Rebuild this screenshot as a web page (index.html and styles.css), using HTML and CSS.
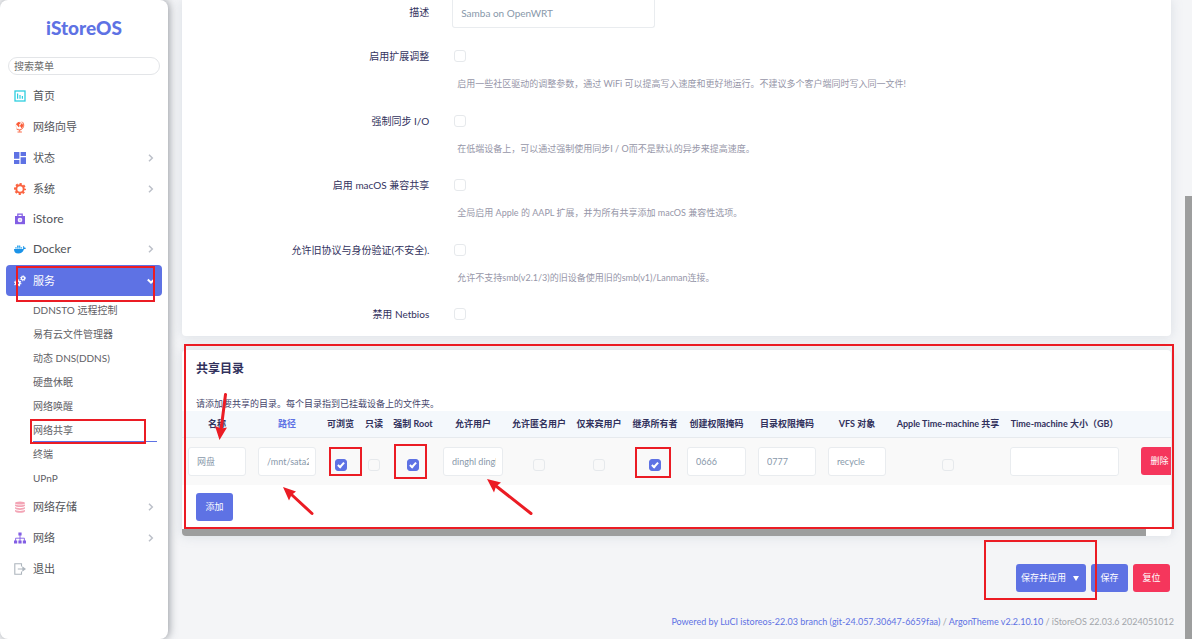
FILE: index.html
```html
<!DOCTYPE html>
<html lang="zh-CN">
<head>
<meta charset="utf-8">
<title>iStoreOS - 网络共享</title>
<link rel="stylesheet" href="styles.css">
</head>
<body>
<div class="app">
  <aside class="sidebar">
    <a class="brand" href="#">iStoreOS</a>
    <input class="search" type="search" placeholder="搜索菜单" aria-label="搜索菜单">
    <nav>
      <ul class="menu">
        <li><a class="item" href="#"><svg class="icon" viewBox="0 0 12 12" fill="none" stroke="#2dcedf"><rect x="1" y="1" width="10" height="10" stroke-width="1.3"/><path d="M3.6 3.5v5.2M6 5v3.7M8.4 6v2.7" stroke-width="1.2"/></svg><span>首页</span></a></li>
        <li><a class="item" href="#"><svg class="icon" viewBox="0 0 12 12"><circle cx="5.6" cy="4.8" r="3.7" fill="#fff" stroke="#fbc4b6" stroke-width=".6"/><path d="M2 3.2 4.3 1l2.3.5-.4 1.4-1.3.7.8 1.4-1 1.2-1.4-1.6zM7.3 2.3l1.8 1.5-.3 2.3-1.6 1.2-.5-1.6-1-.6.8-1z" fill="#fb5a36"/><path d="M8 .7c3 2.2 2 7.6-2.3 8.2-1.3.1-2.4-.2-3.2-.9M5.7 9v1.7M3.5 11h4.4" fill="none" stroke="#fb6a49" stroke-width="1"/></svg><span>网络向导</span></a></li>
        <li><a class="item" href="#"><svg class="icon" viewBox="0 0 12 12" fill="#5e72e4"><path d="M0 0h5.4v6.8H0zM0 8h5.4v4H0zM6.6 0H12v4H6.6zM6.6 5.2H12V12H6.6z"/></svg><span>状态</span><svg class="chevron" viewBox="0 0 8 8"><path d="m2 .8 3.3 3.2L2 7.2"/></svg></a></li>
        <li><a class="item" href="#"><svg class="icon" viewBox="0 0 12 12"><g fill="none" stroke="#fb6340"><circle cx="6" cy="6" r="3.7" stroke-width="2"/><circle cx="6" cy="6" r="5" stroke-width="2" stroke-dasharray="2.1 1.827" stroke-dashoffset="1"/></g></svg><span>系统</span><svg class="chevron" viewBox="0 0 8 8"><path d="m2 .8 3.3 3.2L2 7.2"/></svg></a></li>
        <li><a class="item latin" href="#"><svg class="icon" viewBox="0 0 12 12"><path d="M1 3h10v8.2H1z" fill="#825ee4"/><path d="M3.8 3V1.2h4.4V3" fill="none" stroke="#825ee4" stroke-width="1.2"/><circle cx="6" cy="7" r="2.3" fill="#fff"/><path d="M6 5.6v2.8M4.6 7h2.8" stroke="#c9b9f5" stroke-width=".8"/></svg><span>iStore</span></a></li>
        <li><a class="item latin" href="#"><svg class="icon" viewBox="0 0 12 12" fill="#1b93e8"><path d="M0 6h8.8c.6-.5.6-1.5.1-2.3l.6-.6c.7.5 1 1 1 1.7.6-.2 1.1 0 1.5.3-.4.8-1 1.2-2.1 1.2C9 9.2 7 10.6 4.2 10.6 1.5 10.6 0 9 0 6z"/><path d="M1.2 4.2h1.5v1.4H1.2zM3 4.2h1.5v1.4H3zM4.8 4.2h1.5v1.4H4.8zM6.6 4.2h1.5v1.4H6.6zM3 2.5h1.5v1.4H3zM4.8 2.5h1.5v1.4H4.8z" fill="#35a7ee"/></svg><span>Docker</span><svg class="chevron" viewBox="0 0 8 8"><path d="m2 .8 3.3 3.2L2 7.2"/></svg></a></li>
        <li>
          <a class="item open" href="#"><svg class="icon" viewBox="0 0 12 12" fill="none" stroke="#fff"><circle cx="3.7" cy="8" r="2" stroke-width="1.5"/><circle cx="3.7" cy="8" r="3.1" stroke-width="1.2" stroke-dasharray="1.2 1.235"/><circle cx="9" cy="3.3" r="1.6" stroke-width="1.3"/><circle cx="9" cy="3.3" r="2.5" stroke-width="1" stroke-dasharray="1 .963"/></svg><span>服务</span><svg class="chevron" viewBox="0 0 8 8"><path d="m.8 2.5 3.2 3.2 3.2-3.2"/></svg></a>
          <ul class="submenu">
            <li><a href="#">DDNSTO 远程控制</a></li>
            <li><a href="#">易有云文件管理器</a></li>
            <li><a href="#">动态 DNS(DDNS)</a></li>
            <li><a href="#">硬盘休眠</a></li>
            <li><a href="#">网络唤醒</a></li>
            <li><a class="current" href="#" aria-current="page">网络共享</a></li>
            <li><a href="#">终端</a></li>
            <li><a href="#">UPnP</a></li>
          </ul>
        </li>
        <li><a class="item" href="#"><svg class="icon" viewBox="0 0 12 12" fill="#f3a4b5"><ellipse cx="6" cy="2" rx="5" ry="1.6"/><path d="M1 3.2c1 1.5 9 1.5 10 0v1.6c-1 1.7-9 1.7-10 0zM1 6c1 1.5 9 1.5 10 0v1.6c-1 1.7-9 1.7-10 0zM1 8.8c1 1.5 9 1.5 10 0v1.4c-1 2-9 2-10 0z"/></svg><span>网络存储</span><svg class="chevron" viewBox="0 0 8 8"><path d="m2 .8 3.3 3.2L2 7.2"/></svg></a></li>
        <li><a class="item" href="#"><svg class="icon" viewBox="0 0 12 12" fill="#825ee4"><path d="M4.4.4h3.2v3H4.4zM0 8.6h3.2v3H0zM4.4 8.6h3.2v3H4.4zM8.8 8.6H12v3H8.8z"/><path d="M6 3v6M1.6 9V6.2h8.8V9" fill="none" stroke="#825ee4" stroke-width=".9"/></svg><span>网络</span><svg class="chevron" viewBox="0 0 8 8"><path d="m2 .8 3.3 3.2L2 7.2"/></svg></a></li>
        <li><a class="item" href="#"><svg class="icon" viewBox="0 0 12 12" fill="none" stroke="#adb5bd" stroke-width="1.1"><path d="M7.5 3.5V.8H.8v10.4h6.7V8.5M3.8 6h5"/><path d="M8.3 3.2 12 6 8.300 8.800z" fill="#adb5bd" stroke="none"/></svg><span>退出</span></a></li>
      </ul>
    </nav>
  </aside>

  <main class="main">
    <section class="card settings">
      <div class="field first">
        <label for="desc">描述</label>
        <div class="value"><input class="text" id="desc" type="text" value="Samba on OpenWRT"></div>
      </div>
      <div class="field">
        <label for="tune">启用扩展调整</label>
        <div class="value"><input class="check" id="tune" type="checkbox"><p>启用一些社区驱动的调整参数，通过 WiFi 可以提高写入速度和更好地运行。不建议多个客户端同时写入同一文件!</p></div>
      </div>
      <div class="field">
        <label for="sync">强制同步 I/O</label>
        <div class="value"><input class="check" id="sync" type="checkbox"><p>在低端设备上，可以通过强制使用同步I / O而不是默认的异步来提高速度。</p></div>
      </div>
      <div class="field">
        <label for="macos">启用 macOS 兼容共享</label>
        <div class="value"><input class="check" id="macos" type="checkbox"><p>全局启用 Apple 的 AAPL 扩展，并为所有共享添加 macOS 兼容性选项。</p></div>
      </div>
      <div class="field">
        <label for="legacy">允许旧协议与身份验证(不安全).</label>
        <div class="value"><input class="check" id="legacy" type="checkbox"><p>允许不支持smb(v2.1/3)的旧设备使用旧的smb(v1)/Lanman连接。</p></div>
      </div>
      <div class="field">
        <label for="netbios">禁用 Netbios</label>
        <div class="value"><input class="check" id="netbios" type="checkbox"></div>
      </div>
    </section>

    <section class="card shares">
      <h3>共享目录</h3>
      <p class="hint">请添加要共享的目录。每个目录指到已挂载设备上的文件夹。</p>
      <table class="table">
        <colgroup>
          <col class="w70"><col class="w70"><col class="w37"><col class="w30"><col class="w48"><col class="w72"><col class="w60"><col class="w60"><col class="w52"><col class="w71"><col class="w70"><col class="w70"><col class="w112"><col class="w121"><col class="w70">
        </colgroup>
        <thead>
          <tr><th>名称</th><th><a href="#">路径</a></th><th>可浏览</th><th>只读</th><th>强制 Root</th><th>允许用户</th><th>允许匿名用户</th><th>仅来宾用户</th><th>继承所有者</th><th>创建权限掩码</th><th>目录权限掩码</th><th>VFS 对象</th><th>Apple Time-machine 共享</th><th>Time-machine 大小（GB）</th><th></th></tr>
        </thead>
        <tbody>
          <tr>
            <td><input class="text" type="text" value="网盘" aria-label="名称"></td>
            <td><input class="text" type="text" value="/mnt/sata2" aria-label="路径"></td>
            <td><input class="check" type="checkbox" checked aria-label="可浏览"></td>
            <td><input class="check" type="checkbox" aria-label="只读"></td>
            <td><input class="check" type="checkbox" checked aria-label="强制 Root"></td>
            <td><input class="text" type="text" value="dinghl dinghl" aria-label="允许用户"></td>
            <td><input class="check" type="checkbox" aria-label="允许匿名用户"></td>
            <td><input class="check" type="checkbox" aria-label="仅来宾用户"></td>
            <td><input class="check" type="checkbox" checked aria-label="继承所有者"></td>
            <td><input class="text" type="text" value="0666" aria-label="创建权限掩码"></td>
            <td><input class="text" type="text" value="0777" aria-label="目录权限掩码"></td>
            <td><input class="text" type="text" value="recycle" aria-label="VFS 对象"></td>
            <td><input class="check" type="checkbox" aria-label="Apple Time-machine 共享"></td>
            <td><input class="text" type="text" aria-label="Time-machine 大小（GB）"></td>
            <td class="action"><button class="btn danger" type="button">删除</button></td>
          </tr>
        </tbody>
      </table>
      <div class="add"><button class="btn primary" type="button">添加</button></div>
      <div class="hscroll"><div class="hthumb"></div></div>
    </section>

    <div class="actions">
      <button class="btn primary apply" type="button">保存并应用<span class="caret"></span></button>
      <button class="btn primary" type="button">保存</button>
      <button class="btn danger" type="button">复位</button>
    </div>
    <footer class="footer"><a href="#">Powered by LuCI istoreos-22.03 branch (git-24.057.30647-6659faa)</a> / <a href="#">ArgonTheme v2.2.10.10</a> / iStoreOS 22.03.6 2024051012</footer>
  </main>
  <div class="vscroll"><div class="vthumb"></div></div>
</div>

<svg class="marks" width="1192" height="639" viewBox="0 0 1192 639" aria-hidden="true">
  <g fill="none" stroke="#eb1c24" stroke-width="2">
    <rect x="17" y="267" width="137" height="34"/>
    <rect x="31" y="420" width="114" height="23"/>
    <rect x="185" y="345" width="988" height="183"/>
    <rect x="330" y="448" width="31" height="27"/>
    <rect x="395" y="445" width="31" height="33"/>
    <rect x="636" y="448" width="34" height="29"/>
    <rect x="985" y="541" width="111" height="58"/>
  </g>
  <g stroke="#eb1c24" stroke-width="3" stroke-linecap="round">
    <path d="M225.5 394.5 221 430M312 513.5 292 495M531 513.5 496 486"/>
  </g>
  <g fill="#eb1c24">
    <path d="m219.5 440-4.500-14 6 2.500 6-1z"/>
    <path d="m283 487 13 4.500-4.500 3.500-2.500 5.500z"/>
    <path d="m487 479 14 3.500-5 4-2 6z"/>
  </g>
</svg>
</body>
</html>
```
FILE: styles.css
```css
*, *::after { box-sizing: border-box; }

body {
  margin: 0;
  overflow: hidden;
  background: #f4f5f7;
  color: #32325d;
  font: 10px/16px Lato, "Noto Sans CJK SC", sans-serif;
}

a { color: #5e72e4; text-decoration: none; }
input, button { font: inherit; }
ul { margin: 0; padding: 0; list-style: none; }

.app { display: flex; height: 100vh; }

/* Sidebar */
.sidebar {
  z-index: 1;
  flex: none;
  width: 168px;
  padding: 16px 6px 0;
  border-radius: 8px;
  background: #fff;
  box-shadow: 1px 0 8px rgba(70, 75, 85, .55);
}

.brand {
  display: block;
  font-size: 19px;
  line-height: 24px;
  font-weight: 900;
  text-align: center;
}

.search {
  display: block;
  width: calc(100% - 4px);
  height: 18px;
  margin: 17px 2px 5px;
  padding: 0 5px;
  border: 1px solid #e3e5e8;
  border-radius: 9px;
  background: #fff;
  outline: 0;
}
.search::placeholder { color: #6c6c6c; }

.item {
  display: flex;
  align-items: center;
  height: 31px;
  padding: 0 7px 0 8px;
  border-radius: 4px;
  color: #525459;
  font-size: 11px;
}
.item.latin { height: 30px; font-size: 12px; }
.item.open { margin-top: 1px; background: #5e72e4; color: #fff; }
.item span { flex: 1; }

.icon { width: 12px; height: 12px; margin-right: 7px; }

.chevron {
  width: 8px;
  height: 8px;
  fill: none;
  stroke: #bcc0c9;
  stroke-width: 1.5;
}
.open .chevron { stroke: #fff; stroke-width: 2; }

.submenu { padding: 2px 5px 1px 27px; }
.submenu a {
  display: block;
  height: 24px;
  color: #5f6166;
  line-height: 24px;
}
.submenu .current { border-bottom: 1px solid #5e72e4; }

/* Content */
.main {
  flex: 1;
  min-width: 0;
  padding: 0 14px;
}

.card {
  border-radius: 4px;
  background: #fff;
  box-shadow: 0 0 12px rgba(136, 152, 170, .25);
}

.settings {
  display: grid;
  grid-template-rows: 48px repeat(4, 1fr) 30px;
  height: 336px;
  margin-bottom: 14px;
  border-radius: 0 0 4px 4px;
}

.field {
  display: grid;
  grid-template-columns: 25% 1fr;
  column-gap: 23px;
}
.field label { text-align: right; }
.field.first label { padding-top: 4px; }

.value .check { display: block; margin: 2px 2px 0; }
.value p {
  margin: 15px 0 0 5px;
  color: #9696a8;
  font-size: 9px;
  line-height: 14px;
}
.first .text {
  display: block;
  width: 203px;
  height: 28px;
  padding-bottom: 2px;
  border-top: 0;
  border-radius: 0 0 3px 3px;
  font-size: 10px;
}

.text {
  width: 100%;
  height: 29px;
  padding: 0 6px 0 8px;
  border: 1px solid #e9ecef;
  border-radius: 3px;
  background: #fff;
  color: #8898aa;
  font-size: 9px;
  outline: 0;
}

.check {
  position: relative;
  width: 12px;
  height: 12px;
  margin: 0;
  border: 1px solid #e6e9ec;
  border-radius: 3px;
  appearance: none;
}
.check:checked { border-color: #5e72e4; background: #5e72e4; }
.check:checked::after {
  position: absolute;
  top: 1px;
  left: 3px;
  width: 4px;
  height: 7px;
  border: solid #fff;
  border-width: 0 2px 2px 0;
  content: "";
  transform: rotate(42deg);
}

.shares { overflow: hidden; }
.shares h3 {
  margin: 0;
  padding: 11px 14px 0;
  font-size: 12px;
  line-height: 16px;
  font-weight: 700;
}
.hint {
  margin: 19px 14px 0;
  color: #45456b;
  font-size: 9px;
  line-height: 15px;
}

.table {
  width: 1013px;
  table-layout: fixed;
  border-collapse: collapse;
  font-size: 9px;
}
.table th {
  height: 26px;
  padding: 0;
  border-bottom: 1px solid #e6eaee;
  background: #f4f8fc;
  font-weight: 700;
  line-height: 14px;
  white-space: nowrap;
}
.table td {
  height: 48px;
  padding: 0 6px;
  background: #f9f9f9;
  text-align: center;
}
.table td .check { margin-top: 8px; vertical-align: middle; }
.table .action { padding: 0 16px; text-align: left; }

.w30 { width: 30px; }
.w37 { width: 37px; }
.w48 { width: 48px; }
.w52 { width: 52px; }
.w60 { width: 60px; }
.w70 { width: 70px; }
.w71 { width: 71px; }
.w72 { width: 72px; }
.w112 { width: 112px; }
.w121 { width: 121px; }

.add { padding: 8px 14px; }

.btn {
  display: block;
  height: 28px;
  min-width: 37px;
  padding: 0 9px;
  border: 0;
  border-radius: 3px;
  color: #fff;
  font-size: 9px;
  white-space: nowrap;
}
.primary { background: #5e72e4; }
.danger { background: #f5365c; }

.hscroll { height: 7px; }
.hthumb { width: 97.5%; height: 7px; background: #9d9e9e; }

.actions {
  display: flex;
  justify-content: flex-end;
  gap: 5px;
  padding: 28px 1px 0 0;
}
.apply {
  display: flex;
  align-items: center;
  gap: 7px;
  padding: 0 7px 0 5px;
}
.caret {
  border: 3px solid transparent;
  border-top: 5px solid #fff;
  border-bottom: 0;
}

.footer {
  margin: 22px -3px 0 0;
  color: #a3a6ab;
  font-size: 9px;
  text-align: right;
}

.vscroll { flex: none; width: 7px; padding-top: 196px; }
.vthumb { height: 100%; background: #9d9e9e; }

/* Annotation overlay */
.marks {
  position: absolute;
  top: 0;
  left: 0;
  z-index: 2;
  pointer-events: none;
}
```
